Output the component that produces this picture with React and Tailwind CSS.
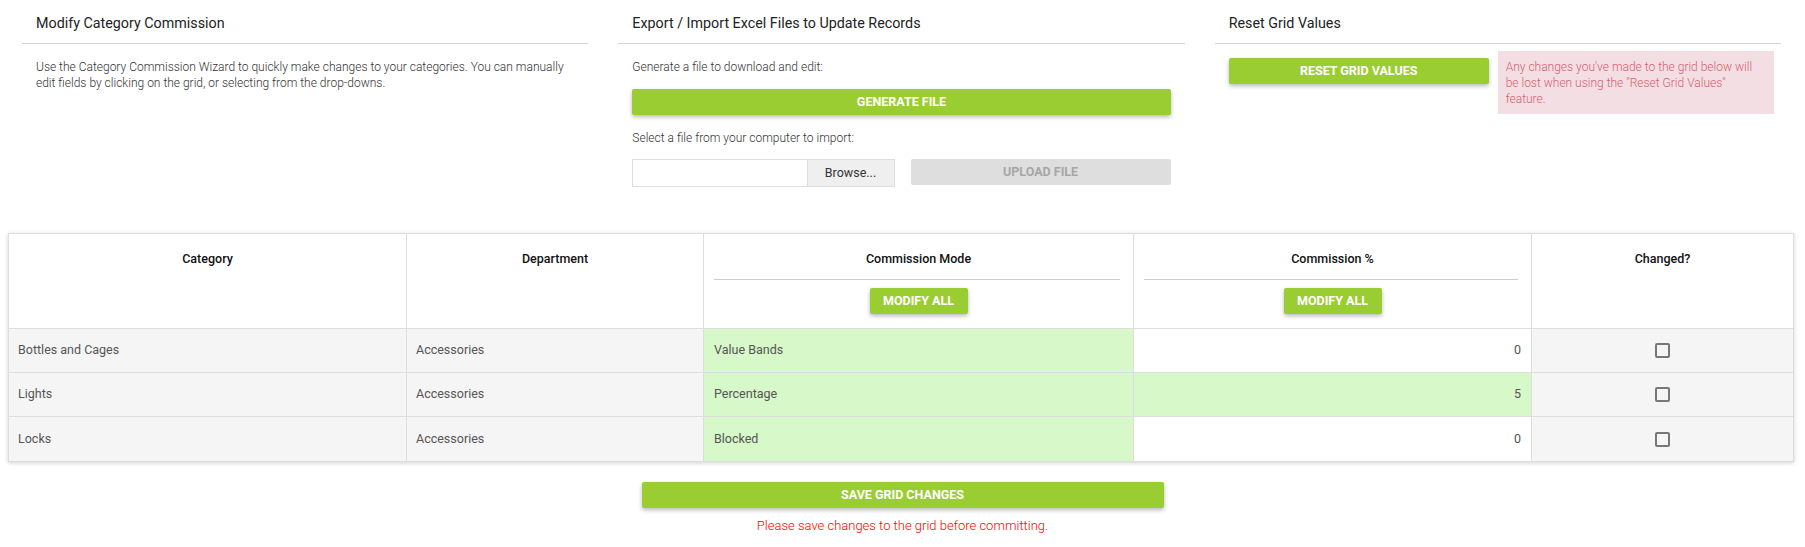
import React from 'react';

const rows = [
  { category: 'Bottles and Cages', department: 'Accessories', mode: 'Value Bands', pct: '0', pctChanged: false },
  { category: 'Lights', department: 'Accessories', mode: 'Percentage', pct: '5', pctChanged: true },
  { category: 'Locks', department: 'Accessories', mode: 'Blocked', pct: '0', pctChanged: false },
];

const GreenButton = ({ children, className = '' }) => (
  <button
    type="button"
    className={`flex h-[26px] items-center justify-center rounded-[2px] bg-[#9acd32] text-[12.5px] font-bold uppercase text-white shadow-[0_2px_4px_rgba(0,0,0,0.28)] ${className}`}
  >
    {children}
  </button>
);

const PanelTitle = ({ children }) => (
  <div className="h-[44px] border-b border-[#d4d4d4] px-[14px] pt-[13px] text-[14.3px] leading-[20px] text-[#222]">
    {children}
  </div>
);

const HeaderCell = ({ title, withButton }) => (
  <div className="flex flex-col border-r border-[#ddd] pt-[17px] last:border-r-0">
    <div className="text-center text-[12.5px] font-medium leading-[16px] text-[#111]">{title}</div>
    {withButton && (
      <>
        <div className="ml-[10px] mr-[13px] mt-[12px] h-px bg-[#ccc]" />
        <div className="mt-[8px] flex justify-center">
          <GreenButton className="w-[98px]">Modify All</GreenButton>
        </div>
      </>
    )}
  </div>
);

export default function App() {
  return (
    <div className="w-full bg-white pb-[20px] font-['Roboto',sans-serif]">
      <div className="grid grid-cols-3 gap-[30px] pl-[22px] pr-[24px]">
        <div>
          <PanelTitle>Modify Category Commission</PanelTitle>
          <p className="mt-[15px] px-[14px] text-[12px] font-light leading-[16px] text-[#333]">
            Use the Category Commission Wizard to quickly make changes to your categories. You can manually edit fields by
            clicking on the grid, or selecting from the drop-downs.
          </p>
        </div>

        <div>
          <PanelTitle>Export / Import Excel Files to Update Records</PanelTitle>
          <div className="px-[14px]">
            <p className="mt-[15px] text-[12px] font-light leading-[16px] text-[#333]">Generate a file to download and edit:</p>
            <GreenButton className="mt-[14px] w-full">Generate File</GreenButton>
            <p className="mt-[15px] text-[12px] font-light leading-[16px] text-[#333]">Select a file from your computer to import:</p>
            <div className="mt-[13px] flex items-start gap-[16px]">
              <div className="flex h-[28px] flex-1 border border-[#ddd]">
                <div className="flex-1 bg-white" />
                <div className="flex w-[87px] items-center justify-center border-l border-[#ddd] bg-[#efefef] text-[12.5px] text-[#333]">
                  Browse...
                </div>
              </div>
              <button
                type="button"
                className="flex h-[26px] flex-1 items-center justify-center rounded-[2px] bg-[#dedede] text-[12.5px] font-bold text-[#a6a6a6]"
              >
                UPLOAD FILE
              </button>
            </div>
          </div>
        </div>

        <div>
          <PanelTitle>Reset Grid Values</PanelTitle>
          <div className="flex items-start">
            <GreenButton className="ml-[14px] mt-[14px] w-[260px] shrink-0">Reset Grid Values</GreenButton>
            <div className="ml-[9px] mr-[7px] mt-[7px] flex-1 bg-[#f3dfe3] px-[8px] pb-[7px] pt-[8px] text-[12px] font-light leading-[16px] text-[#d4606f]">
              Any changes you've made to the grid below will be lost when using the "Reset Grid Values" feature.
            </div>
          </div>
        </div>
      </div>

      <div className="ml-[8px] mr-[11px] mt-[46px] border border-[#ddd] shadow-[0_1px_4px_rgba(0,0,0,0.18)]">
        <div className="grid h-[95px] grid-cols-[398px_297px_430px_398px_1fr] border-b border-[#ddd] bg-white">
          <HeaderCell title="Category" />
          <HeaderCell title="Department" />
          <HeaderCell title="Commission Mode" withButton />
          <HeaderCell title="Commission %" withButton />
          <HeaderCell title="Changed?" />
        </div>
        {rows.map((r, i) => (
          <div
            key={r.category}
            className={`grid h-[44px] grid-cols-[398px_297px_430px_398px_1fr] text-[12.5px] text-[#555] ${i < rows.length - 1 ? 'border-b border-[#ddd]' : ''}`}
          >
            <div className="flex items-center border-r border-[#ddd] bg-[#f5f5f5] pl-[9px]">{r.category}</div>
            <div className="flex items-center border-r border-[#ddd] bg-[#f5f5f5] pl-[9px]">{r.department}</div>
            <div className="flex items-center border-r border-[#ddd] bg-[#d7f8c8] pl-[10px]">{r.mode}</div>
            <div
              className={`flex items-center justify-end border-r border-[#ddd] pr-[10px] ${r.pctChanged ? 'bg-[#d7f8c8]' : 'bg-white'}`}
            >
              {r.pct}
            </div>
            <div className="flex items-center justify-center bg-[#f5f5f5]">
              <span className="block h-[15px] w-[15px] rounded-[2px] border-2 border-[#777]" />
            </div>
          </div>
        ))}
      </div>

      <div className="mt-[20px] flex flex-col items-center">
        <GreenButton className="w-[522px]">Save Grid Changes</GreenButton>
        <p className="mt-[10px] text-[13px] font-light leading-[16px] text-[#ff0000]">
          Please save changes to the grid before committing.
        </p>
      </div>
    </div>
  );
}
